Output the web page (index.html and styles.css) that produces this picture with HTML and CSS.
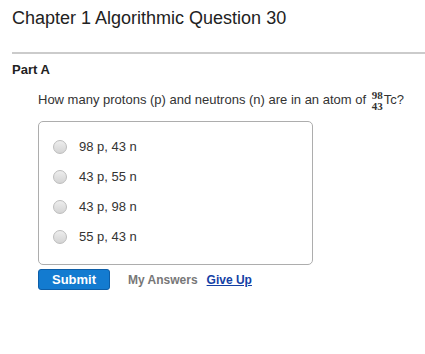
FILE: index.html
```html
<!DOCTYPE html>
<html>
<head>
<meta charset="utf-8">
<link rel="stylesheet" href="styles.css">
</head>
<body>
<div class="page">
  <h1 class="title">Chapter 1 Algorithmic Question 30</h1>
  <hr class="rule">
  <h2 class="part">Part A</h2>
  <div class="content">
    <p class="question">How many protons (p) and neutrons (n) are in an atom of <span class="nums"><span class="num">98</span><span class="num">43</span></span>Tc?</p>
    <div class="choices">
      <label class="choice"><span class="radio"></span><span>98 p, 43 n</span></label>
      <label class="choice"><span class="radio"></span><span>43 p, 55 n</span></label>
      <label class="choice"><span class="radio"></span><span>43 p, 98 n</span></label>
      <label class="choice"><span class="radio"></span><span>55 p, 43 n</span></label>
    </div>
    <div class="actions">
      <button class="submit">Submit</button>
      <span class="my-answers">My Answers</span>
      <a class="give-up" href="#">Give Up</a>
    </div>
  </div>
</div>
</body>
</html>
```
FILE: styles.css
```css
html, body {
  margin: 0;
  padding: 0;
  background: #fff;
}
body {
  font-family: "Liberation Sans", Arial, sans-serif;
  color: #222;
}
.page {
  padding: 0 0 0 12px;
}
.title {
  margin: 0;
  padding-top: 7px;
  font-size: 18px;
  font-weight: normal;
  line-height: 22px;
  color: #222;
}
.rule {
  margin: 23px 0 0 0;
  border: 0;
  height: 2px;
  background: #cbcbcb;
}
.part {
  margin: 8px 0 0 0;
  font-size: 13px;
  font-weight: bold;
  line-height: 16px;
  color: #222;
}
.content {
  padding-left: 26px;
}
.question {
  margin: 12px 0 0 0;
  font-size: 13px;
  line-height: 18px;
  height: 18px;
  color: #333;
}
.nums {
  display: inline-block;
  vertical-align: -6px;
  font-family: "Liberation Serif", "Times New Roman", serif;
  font-size: 11px;
  font-weight: bold;
  line-height: 11px;
  text-align: right;
  margin: 0 1px 0 2px;
}
.num {
  display: block;
}
.choices {
  margin-top: 13px;
  width: 273px;
  border: 1px solid #adadad;
  border-radius: 5px;
  padding: 17px 0 19px 0;
  display: flex;
  flex-direction: column;
  gap: 14px;
}
.choice {
  display: flex;
  align-items: center;
  font-size: 13px;
  line-height: 16px;
  color: #333;
  padding-left: 14px;
}
.radio {
  width: 12px;
  height: 12px;
  border-radius: 50%;
  border: 1px solid #bdbdbd;
  background: linear-gradient(#ededed, #d4d4d4);
  margin-right: 12px;
  flex: none;
}
.actions {
  margin-top: 4px;
  display: flex;
  align-items: center;
}
.submit {
  width: 72px;
  height: 21px;
  padding: 0;
  border: 1px solid #0d5ea8;
  border-radius: 3px;
  background: #137bd0;
  color: #fff;
  font-family: "Liberation Sans", Arial, sans-serif;
  font-size: 13px;
  font-weight: bold;
  line-height: 19px;
}
.my-answers {
  margin-left: 18px;
  font-size: 12px;
  font-weight: bold;
  color: #777;
}
.give-up {
  margin-left: 9px;
  font-size: 12px;
  font-weight: bold;
  color: #1440a5;
  text-decoration: underline;
}
```
